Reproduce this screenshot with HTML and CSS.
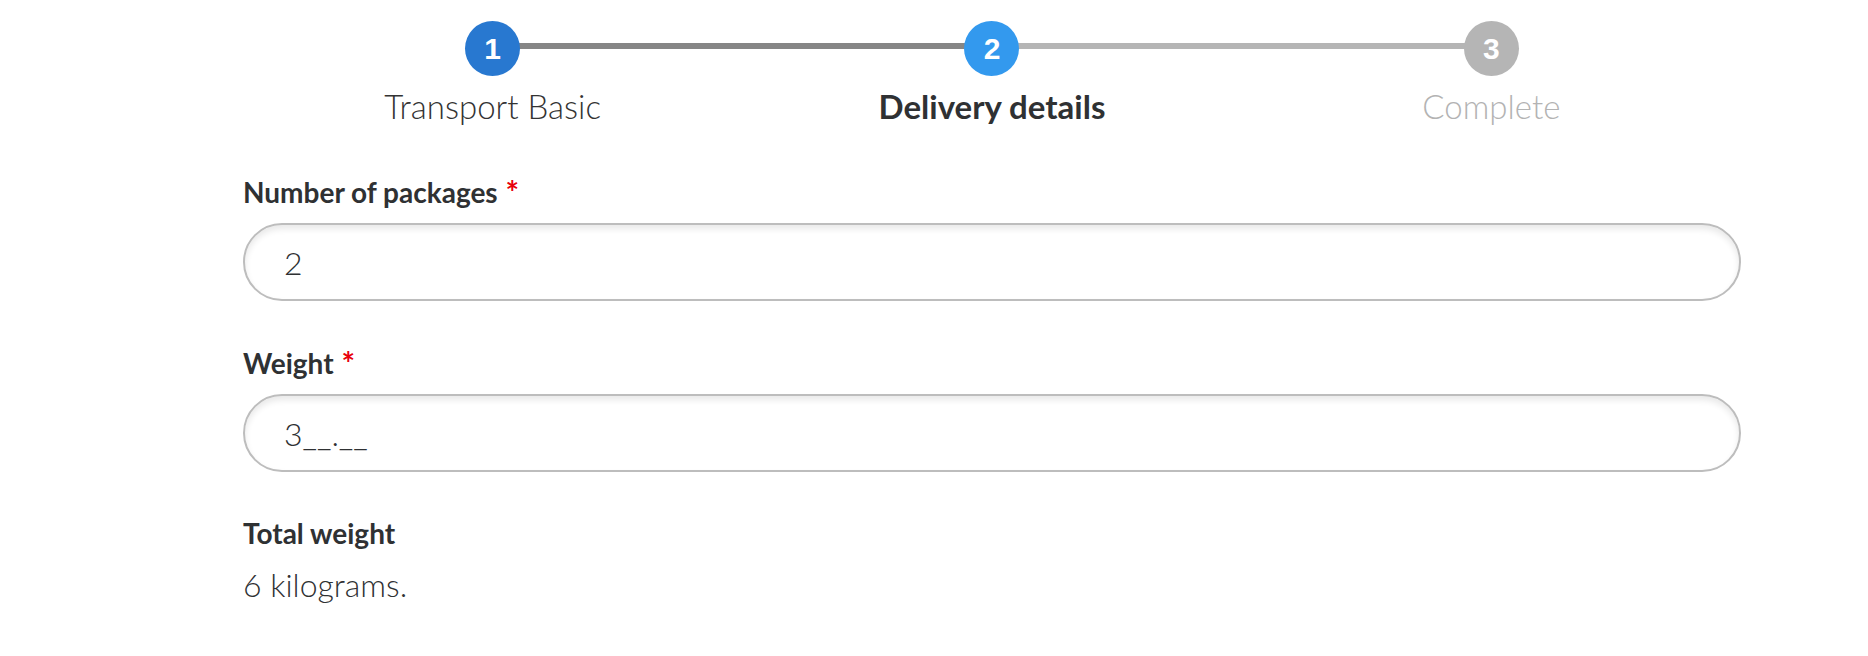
FILE: index.html
```html
<!DOCTYPE html>
<html lang="en">
<head>
<meta charset="utf-8">
<title>Delivery details</title>
<link rel="stylesheet" href="styles.css">
</head>
<body>
<div class="page">
  <ol class="stepper">
    <li class="step step-done">
      <span class="step-dot">1</span>
      <span class="step-label">Transport Basic</span>
    </li>
    <li class="step step-current">
      <span class="step-dot">2</span>
      <span class="step-label">Delivery details</span>
    </li>
    <li class="step step-todo">
      <span class="step-dot">3</span>
      <span class="step-label">Complete</span>
    </li>
  </ol>

  <form class="form">
    <div class="field">
      <label class="field-label" for="packages">Number of packages <span class="req">*</span></label>
      <input class="field-input" id="packages" type="text" value="2">
    </div>
    <div class="field">
      <label class="field-label" for="weight">Weight <span class="req">*</span></label>
      <input class="field-input" id="weight" type="text" value="3__.__">
    </div>
    <div class="field">
      <div class="field-label">Total weight</div>
      <div class="field-value">6 kilograms.</div>
    </div>
  </form>
</div>
</body>
</html>
```

FILE: styles.css
```css
html, body {
  margin: 0;
  padding: 0;
  background: #ffffff;
}

body {
  font-family: "Lato", "Liberation Sans", sans-serif;
  color: #2f3133;
}

.page {
  width: 1498px;
  padding-left: 243px;
  padding-top: 21px;
  padding-bottom: 40px;
}

.stepper {
  list-style: none;
  margin: 0;
  padding: 0;
  display: grid;
  grid-template-columns: repeat(3, 1fr);
}

.step {
  position: relative;
  display: flex;
  flex-direction: column;
  align-items: center;
}

.step:not(:last-child)::after {
  content: "";
  position: absolute;
  top: 22px;
  left: 50%;
  width: 100%;
  height: 6px;
  background: #868686;
  z-index: 0;
}

.step-current::after {
  background: #b5b5b5 !important;
}

.step-dot {
  position: relative;
  z-index: 1;
  width: 55px;
  height: 55px;
  border-radius: 50%;
  display: flex;
  align-items: center;
  justify-content: center;
  color: #ffffff;
  font-family: "Liberation Sans", Arial, sans-serif;
  font-weight: 700;
  font-size: 30px;
  line-height: 1;
}

.step-done .step-dot { background: #2878d0; }
.step-current .step-dot { background: #3399ee; }
.step-todo .step-dot { background: #b5b5b5; }

.step-label {
  margin-top: 13px;
  font-size: 33px;
  line-height: 34px;
  font-weight: 300;
  color: #333333;
}

.step-current .step-label {
  font-weight: 700;
  color: #2f3133;
}

.step-todo .step-label {
  color: #b3b3b3;
}

.form {
  margin-top: 53px;
  display: flex;
  flex-direction: column;
  gap: 46px;
}

.field {
  display: flex;
  flex-direction: column;
}

.field-label {
  font-size: 28px;
  line-height: 30px;
  font-weight: 700;
  color: #2f3133;
}

.req {
  position: relative;
  top: 2px;
  color: #e8000b;
  margin-left: 1px;
  font-size: 32px;
  line-height: 30px;
}

.field-input {
  margin-top: 16px;
  box-sizing: border-box;
  width: 100%;
  height: 78px;
  border: 2px solid #bdbdbd;
  border-radius: 39px;
  box-shadow: inset 0 4px 6px rgba(0, 0, 0, 0.09);
  padding: 0 39px;
  font-family: "Lato", "Liberation Sans", sans-serif;
  font-size: 32px;
  font-weight: 300;
  color: #2f3133;
  background: #ffffff;
  outline: none;
}

.field-value {
  margin-top: 17px;
  font-size: 32px;
  line-height: 40px;
  font-weight: 300;
  color: #2f3133;
}
```
